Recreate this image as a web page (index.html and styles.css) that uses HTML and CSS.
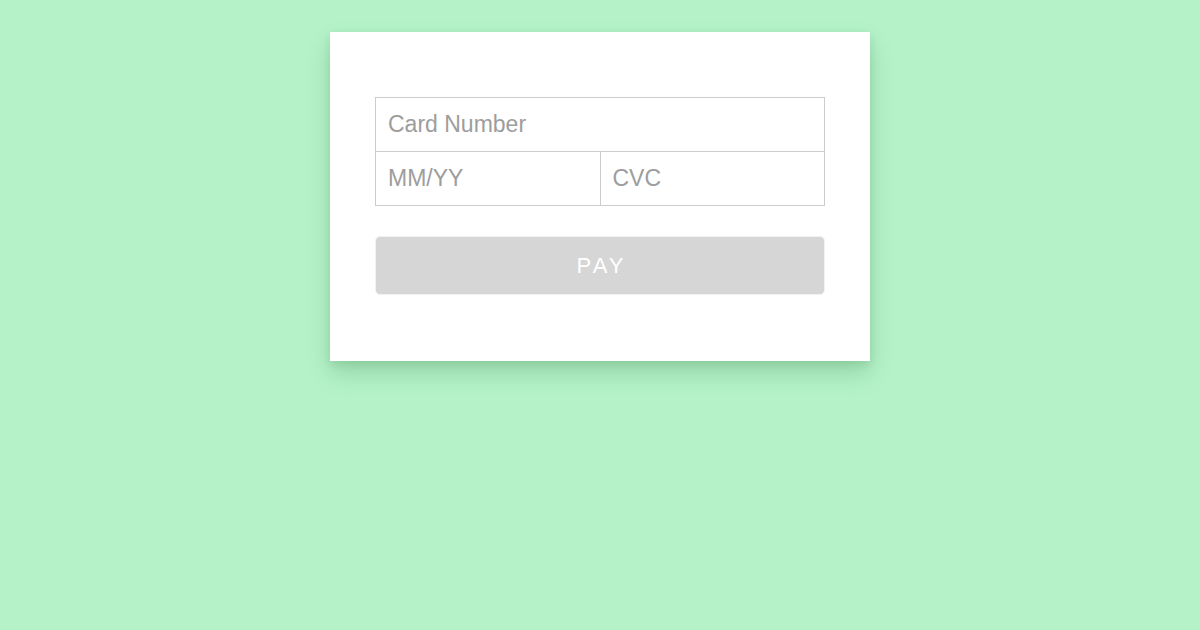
FILE: index.html
```html
<!DOCTYPE html>
<html lang="en">
<head>
  <meta charset="UTF-8" />
  <title>Checkout</title>
  <link rel="stylesheet" href="styles.css">
</head>
<body>
  <div class="card">
    <form class="pay-form" onsubmit="return false;">
      <div class="fields">
        <input class="field full" placeholder="Card Number" />
        <div class="field-row">
          <input class="field" placeholder="MM/YY" />
          <input class="field" placeholder="CVC" />
        </div>
      </div>
      <button class="pay-btn" disabled>PAY</button>
    </form>
  </div>
</body>
</html>
```

FILE: styles.css
```css
html, body { background: #b5f2c8; }
body {
  font-family: "Liberation Sans", Arial, sans-serif; margin: 0;
  padding-top: 32px; min-height: 100vh; box-sizing: border-box;
}
.card {
  width: 540px; margin: 0 auto; background: #fff; box-sizing: border-box;
  padding: 65px 45px 66px;
  box-shadow: 0 12px 22px rgba(30, 110, 50, 0.22), 0 3px 8px rgba(30, 100, 50, 0.1);
}
.fields { border: 1px solid #ccc; }
.field-row { display: flex; border-top: 1px solid #ccc; }
.field {
  display: block; width: 100%; box-sizing: border-box; height: 53px;
  border: none; padding: 0 12px; font-family: inherit; font-size: 23px; color: #555;
  outline: none; background: #fff;
}
.field::placeholder { color: #9d9d9d; }
.field-row .field { flex: 1; min-width: 0; }
.field-row .field + .field { border-left: 1px solid #ccc; }
.pay-btn {
  display: block; width: 100%; height: 59px; margin-top: 30px;
  background: #d6d6d6; color: #fff; border: 1px solid #f2f2f2; border-radius: 5px;
  font-family: inherit; font-size: 22px; letter-spacing: 3px; text-indent: 3px;
}
```
